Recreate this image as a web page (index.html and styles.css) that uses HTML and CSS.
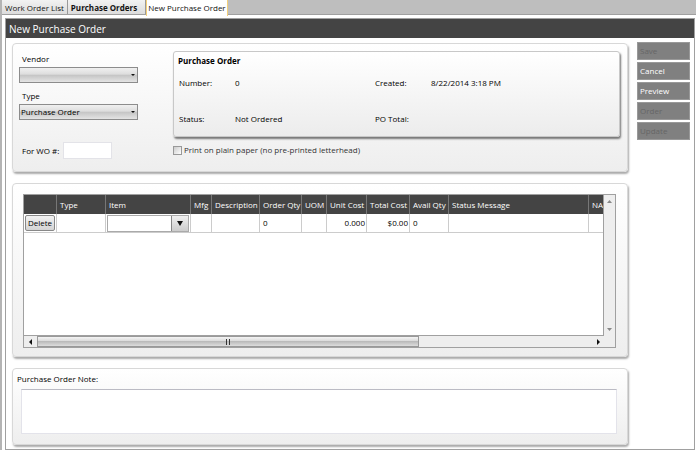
FILE: index.html
```
<!DOCTYPE html>
<html lang="en">
<head>
  <meta charset="utf-8">
  <title>New Purchase Order</title>
  <link rel="stylesheet" href="styles.css">
</head>
<body>
  <nav class="tabs">
    <a class="tab" href="#">Work Order List</a>
    <a class="tab tab-bold" href="#">Purchase Orders</a>
    <a class="tab tab-active" href="#">New Purchase Order</a>
  </nav>

  <div class="window">
    <h1 class="title">New Purchase Order</h1>
    <div class="content">
      <main class="panels">

        <section class="panel order">
          <div class="fields">
            <label class="field-label" for="vendor">Vendor</label>
            <div class="combo">
              <select id="vendor"><option></option></select>
            </div>
            <label class="field-label" for="type">Type</label>
            <div class="combo">
              <select id="type"><option>Purchase Order</option></select>
            </div>
            <div class="wo">
              <label for="wo">For WO #:</label>
              <input type="text" id="wo">
            </div>
          </div>
          <div class="summary">
            <div class="info">
              <h2>Purchase Order</h2>
              <dl>
                <dt>Number:</dt><dd>0</dd>
                <dt>Created:</dt><dd>8/22/2014 3:18 PM</dd>
                <dt>Status:</dt><dd>Not Ordered</dd>
                <dt>PO Total:</dt><dd></dd>
              </dl>
            </div>
            <label class="plain"><input type="checkbox"> Print on plain paper (no pre-printed letterhead)</label>
          </div>
        </section>

        <section class="panel lines">
          <div class="grid">
            <div class="viewport">
              <table>
                <colgroup>
                  <col class="c-action"><col class="c-type"><col class="c-item"><col class="c-mfg">
                  <col class="c-desc"><col class="c-qty"><col class="c-uom"><col class="c-cost">
                  <col class="c-total"><col class="c-avail"><col class="c-status"><col>
                </colgroup>
                <thead>
                  <tr>
                    <th></th><th>Type</th><th>Item</th><th>Mfg</th><th>Description</th><th>Order Qty</th>
                    <th>UOM</th><th>Unit Cost</th><th>Total Cost</th><th>Avail Qty</th><th>Status Message</th><th>NA</th>
                  </tr>
                </thead>
                <tbody>
                  <tr>
                    <td class="flush"><button class="delete" type="button">Delete</button></td>
                    <td></td>
                    <td class="flush">
                      <div class="picker">
                        <input type="text" aria-label="Item">
                        <button type="button" aria-label="Choose item"><svg width="6" height="5" viewBox="0 0 6 5"><path d="M0 0h6L3 5z" fill="#111"/></svg></button>
                      </div>
                    </td>
                    <td></td><td></td><td>0</td><td></td>
                    <td class="num">0.000</td><td class="num">$0.00</td><td>0</td><td></td><td></td>
                  </tr>
                </tbody>
              </table>
            </div>
            <div class="vscroll">
              <svg width="5" height="3" viewBox="0 0 5 3"><path d="M0 3h5L2.500 0z" fill="#888"/></svg>
              <svg width="5" height="3" viewBox="0 0 5 3"><path d="M0 0h5L2.500 3z" fill="#888"/></svg>
            </div>
            <div class="hscroll">
              <span class="arrow"><svg width="3" height="6" viewBox="0 0 3 6"><path d="M3 0v6L0 3z" fill="#111"/></svg></span>
              <span class="thumb"><i class="grip"></i></span>
              <span class="track"></span>
              <span class="arrow arrow-end"><svg width="3" height="6" viewBox="0 0 3 6"><path d="M0 0v6L3 3z" fill="#111"/></svg></span>
            </div>
          </div>
        </section>

        <section class="panel note">
          <label for="note">Purchase Order Note:</label>
          <textarea id="note"></textarea>
        </section>
      </main>

      <aside class="actions">
        <button type="button" disabled>Save</button>
        <button type="button">Cancel</button>
        <button type="button">Preview</button>
        <button type="button" disabled>Order</button>
        <button type="button" disabled>Update</button>
      </aside>
    </div>
  </div>
</body>
</html>
```
FILE: styles.css
```
* {
  box-sizing: border-box;
}
body {
  margin: 0;
  min-height: 100vh;
  display: flex;
  flex-direction: column;
  border-left: 2px solid #b4b4b4;
  background: #fff;
  font: 8px/12px "Open Sans", "Segoe UI", sans-serif;
  color: #000;
}
input, select, textarea, button {
  font: inherit;
  color: inherit;
  margin: 0;
  border-radius: 0;
}

/* tabs */
.tabs {
  display: flex;
  height: 15px;
  background: #bebebe;
  border-bottom: 1px solid #a0a0a0;
}
.tab {
  padding: 2px 3px;
  background: linear-gradient(#f2f2f2, #dcdcdc);
  border-right: 1px solid #999;
  color: #111;
  text-decoration: none;
  white-space: nowrap;
}
.tab-bold {
  padding-right: 8px;
  font-weight: bold;
}
.tab-active {
  height: 16px;
  padding: 2px 1px;
  background: #fff;
  border: 1px solid #f3cf7a;
  border-top: 0;
  border-bottom: 0;
}

/* window */
.window {
  flex: 1;
  display: flex;
  flex-direction: column;
  margin: 3px 1px 0 3px;
  border: 1px solid #a0a0a0;
}
.title {
  margin: 0;
  padding: 2px 3px 1px;
  background: #444;
  color: #fff;
  font-size: 10px;
  line-height: 16px;
  font-weight: 500;
}
.content {
  flex: 1;
  display: flex;
  gap: 9px;
  padding: 4px 4px 4px 6px;
}
.panels {
  flex: 1;
  min-width: 0;
  display: flex;
  flex-direction: column;
  gap: 11px;
  padding-top: 1px;
}
.panel {
  border: 1px solid #d8d8d8;
  border-radius: 4px;
  background: linear-gradient(#fff, #eee);
  box-shadow: 1px 2px 2px #aaa;
}

/* order header */
.order {
  display: flex;
  gap: 35px;
  height: 129px;
  padding: 7px 7px 7px 6px;
}
.fields {
  width: 119px;
}
.field-label {
  display: block;
  padding: 2px 3px;
  height: 16px;
}
.combo {
  position: relative;
  margin-bottom: 5px;
}
.combo select {
  display: block;
  appearance: none;
  width: 100%;
  height: 16px;
  padding: 0 1px;
  border: 1px solid #8c8c8c;
  background: linear-gradient(#f0f0f0, #ddd 45%, #c4c4c4 50%, #e4e4e4);
}
.combo::after {
  content: "";
  position: absolute;
  right: 3px;
  top: 7px;
  border: 2px solid transparent;
  border-top-color: #111;
  pointer-events: none;
}
.wo {
  display: flex;
  align-items: center;
  justify-content: space-between;
  margin-top: 22px;
  padding-left: 3px;
  width: 93px;
  white-space: nowrap;
}
.wo input {
  width: 49px;
  height: 17px;
  border: 1px solid #e3e3e8;
  background: #fff;
}
.summary {
  flex: 1;
}
.info {
  height: 86px;
  padding: 3px 4px;
  border: 1px solid #c8c8c8;
  border-radius: 3px;
  background: linear-gradient(#fff, #ececec);
  box-shadow: 1px 2px 2px #777;
}
.info h2 {
  margin: 0;
  font-size: 8px;
  line-height: 12px;
}
.info dl {
  display: grid;
  grid-template-columns: 56px 140px 56px 1fr;
  row-gap: 24px;
  margin: 10px 1px 0;
}
.info dd {
  margin: 0;
}
.plain {
  display: flex;
  align-items: center;
  gap: 2px;
  margin-top: 7px;
  color: #333;
}
.plain input {
  appearance: none;
  width: 9px;
  height: 9px;
  border: 1px solid #999;
  background: linear-gradient(135deg, #ccc, #fff);
}

/* line items */
.lines {
  height: 174px;
  padding: 10px 11px 10px 10px;
}
.grid {
  display: grid;
  grid-template-columns: 1fr 11px;
  grid-template-rows: 141px 11px;
  border: 1px solid #a0a0a0;
  background: #eee;
}
.viewport {
  overflow: hidden;
  border: 1px solid #a0a0a0;
  border-width: 0 1px 1px 0;
  background: #fff;
}
table {
  width: 100%;
  table-layout: fixed;
  border-collapse: separate;
  border-spacing: 0;
}
.c-action { width: 33px; }
.c-type { width: 49px; }
.c-item { width: 85px; }
.c-mfg { width: 21px; }
.c-desc { width: 48px; }
.c-qty { width: 42px; }
.c-uom { width: 25px; }
.c-cost { width: 40px; }
.c-total { width: 43px; }
.c-avail { width: 39px; }
.c-status { width: 140px; }
th, td {
  height: 19px;
  padding: 0 1px 0 3px;
  border-right: 1px solid #ccc;
  text-align: left;
  font-weight: normal;
  white-space: nowrap;
}
th {
  background: #444;
  border-color: #777;
  color: #fff;
}
td {
  border-bottom: 1px solid #ccc;
}
th:last-child, td:last-child {
  border-right: 0;
}
td.flush {
  padding: 0 1px;
}
.num {
  text-align: right;
}
.delete {
  display: block;
  width: 100%;
  height: 16px;
  padding: 0;
  border: 1px solid #888;
  border-radius: 2px;
  background: linear-gradient(#f2f2f2, #d4d4d4);
}
.picker {
  display: flex;
  height: 17px;
  border: 1px solid #aaa;
}
.picker input {
  flex: 1;
  min-width: 0;
  padding: 0 2px;
  border: 0;
}
.picker button {
  display: grid;
  place-items: center;
  width: 17px;
  padding: 0;
  border: 0;
  border-left: 1px solid #888;
  background: linear-gradient(#f0f0f0, #ccc);
}
.vscroll {
  display: flex;
  flex-direction: column;
  align-items: center;
  justify-content: space-between;
  padding: 5px 0;
}
.hscroll {
  grid-column: 1 / -1;
  display: flex;
}
.arrow {
  display: grid;
  place-items: center;
  width: 13px;
}
.arrow-end {
  margin-right: 10px;
}
.thumb {
  flex: 381;
  display: grid;
  place-items: center;
  border: 1px solid #999;
  background: linear-gradient(#f4f4f4, #ddd 40%, #bbb 50%, #ddd);
}
.track {
  flex: 174;
}
.grip {
  width: 4px;
  height: 6px;
  border: 1px solid #333;
  border-width: 0 1px;
}

/* note */
.note {
  flex: 1;
  display: flex;
  flex-direction: column;
  gap: 4px;
  padding: 4px 10px 10px 4px;
}
.note textarea {
  flex: 1;
  margin-left: 4px;
  resize: none;
  border: 1px solid #e3e3ea;
  border-top-color: #bbbbc4;
  background: #fff;
}

/* side buttons */
.actions {
  display: flex;
  flex-direction: column;
  gap: 2px;
  width: 53px;
}
.actions button {
  height: 18px;
  padding: 0 2px;
  border: 1px solid #999;
  background: #808080;
  color: #fff;
  text-align: left;
}
.actions button:disabled {
  color: #666;
}
```
